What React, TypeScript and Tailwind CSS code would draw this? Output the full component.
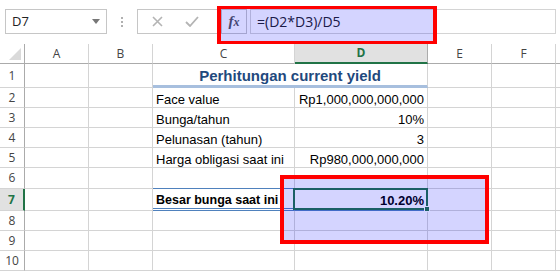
import type { ReactNode } from 'react'

const cols = ['A', 'B', 'C', 'D', 'E', 'F', '']
const rowH = ['h-[24px]', 'h-[20px]', 'h-[20px]', 'h-[20px]', 'h-[20px]', 'h-[21px]', 'h-[22px]', 'h-[20px]', 'h-[20px]', 'h-[20px]']

const rows: { c?: string; d?: string; bold?: boolean }[] = [
  {},
  { c: 'Face value', d: 'Rp1,000,000,000,000' },
  { c: 'Bunga/tahun', d: '10%' },
  { c: 'Pelunasan (tahun)', d: '3' },
  { c: 'Harga obligasi saat ini', d: 'Rp980,000,000,000' },
  {},
  { c: 'Besar bunga saat ini', d: '10.20%', bold: true },
  {},
  {},
  {},
]

function Cell({ children, className = '' }: { children?: ReactNode; className?: string }) {
  return <div className={`relative flex items-end border-r border-b border-[#d4d4d4] px-[3px] pb-px leading-[13px] ${className}`}>{children}</div>
}

export default function App() {
  return (
    <div className="relative w-[560px] h-[271px] overflow-hidden bg-white font-['Liberation_Sans',Arial,sans-serif] text-[13px] text-black">
      {/* formula bar */}
      <div className="flex h-[44px] items-start pt-[9px] pl-[5px] pr-[4px] font-['Open_Sans','Noto_Sans',sans-serif]">
        <div className="flex h-[25px] w-[102px] items-center justify-between border border-[#c6c6c6] pl-[6px] pr-[6px] text-[13px] text-[#222]">
          <span>D7</span>
          <svg width="8" height="5" viewBox="0 0 8 5"><path d="M0 0h8L4 5z" fill="#777" /></svg>
        </div>
        <div className="flex h-[25px] w-[30px] flex-col items-center justify-center gap-[2px]">
          <span className="h-[2px] w-[2px] bg-[#b0b0b0]" />
          <span className="h-[2px] w-[2px] bg-[#b0b0b0]" />
          <span className="h-[2px] w-[2px] bg-[#b0b0b0]" />
        </div>
        <div className="flex h-[25px] w-[81px] items-center gap-[22px] border border-[#c6c6c6] pl-[14px]">
          <svg width="11" height="11" viewBox="0 0 11 11"><path d="M1 1l9 9M10 1l-9 9" stroke="#b4b4b4" strokeWidth="1.6" /></svg>
          <svg width="14" height="11" viewBox="0 0 14 11"><path d="M1 6l4 4 8-9" stroke="#b4b4b4" strokeWidth="1.8" fill="none" /></svg>
        </div>
        <div className="ml-[3px] flex h-[25px] w-[26px] items-center justify-center border border-[#c6c6c6] font-['Liberation_Serif',serif] font-bold italic text-[#555]">
          <span className="text-[15px]">f</span><span className="text-[12px]">x</span>
        </div>
        <div className="ml-[3px] flex h-[25px] flex-1 items-center border border-[#d4d4d4] pl-[6px] text-[14px] text-[#222]">
          =(D2*D3)/D5
        </div>
      </div>

      {/* sheet */}
      <div className="grid grid-cols-[25px_64px_64px_142px_133px_64px_64px_1fr]">
        {/* corner */}
        <div className="relative h-[20px] border-r border-b border-[#ababab]">
          <svg className="absolute bottom-[3px] right-[3px]" width="12" height="12" viewBox="0 0 12 12"><path d="M12 0v12H0z" fill="#dadada" /></svg>
        </div>
        {cols.map(c => (
          <div
            key={c || 'g'}
            className={`flex h-[20px] items-center justify-center font-['Open_Sans','Noto_Sans',sans-serif] text-[12px] ${
              c === 'D'
                ? 'border-r border-[#ababab] border-b-2 border-b-[#217346] bg-[#e1e1e1] font-bold text-[#217346]'
                : 'border-r border-r-[#d4d4d4] border-b border-b-[#ababab] text-[#444]'
            }`}
          >
            {c}
          </div>
        ))}

        {rows.map((r, i) => {
          const n = i + 1
          const h = rowH[i]
          const sel = n === 7
          return [
            <div
              key={`h${n}`}
              className={`flex ${h} items-center justify-center font-['Open_Sans','Noto_Sans',sans-serif] text-[12px] ${
                sel
                  ? 'border-b border-b-[#d4d4d4] border-r-2 border-r-[#217346] bg-[#e1e1e1] font-bold text-[#217346]'
                  : 'border-b border-b-[#d4d4d4] border-r border-r-[#ababab] text-[#444]'
              }`}
            >
              {n}
            </div>,
            <Cell key={`a${n}`} className={h} />,
            <Cell key={`b${n}`} className={h} />,
            n === 1 ? (
              <div
                key="title"
                className={`col-span-2 flex ${h} items-end justify-center border-r border-[#d4d4d4] border-b-[3px] border-b-[#a7bfde] pb-[2px] text-[15px] font-bold leading-[15px] text-[#1f497d]`}
              >
                Perhitungan current yield
              </div>
            ) : (
              [
                <Cell
                  key={`c${n}`}
                  className={`${h} ${n === 6 ? 'border-b-[#4f81bd]' : ''} ${sel ? 'border-b-[3px] border-double border-b-[#4f81bd] text-[12.5px] font-bold' : ''}`}
                >
                  <span className="whitespace-nowrap">{r.c}</span>
                </Cell>,
                <Cell
                  key={`d${n}`}
                  className={`${h} justify-end ${n === 6 ? 'border-b-[#4f81bd]' : ''} ${sel ? 'border-b-[3px] border-double border-b-[#4f81bd] font-bold' : ''}`}
                >
                  {r.d}
                  {sel && (
                    <div className="absolute -left-[2px] -top-[1px] -right-px -bottom-[2px] z-10 border-2 border-[#217346]">
                      <div className="absolute -right-[4px] -bottom-[4px] h-[6px] w-[6px] border border-white bg-[#217346]" />
                    </div>
                  )}
                </Cell>,
              ]
            ),
            <Cell key={`e${n}`} className={h} />,
            <Cell key={`f${n}`} className={h} />,
            <Cell key={`g${n}`} className={`${h} border-r-0`} />,
          ]
        })}
      </div>

      {/* highlight annotations */}
      <div className="absolute left-[217px] top-[6px] z-20 h-[38px] w-[220px] border-x-4 border-y-[3px] border-[#ff0000] bg-[rgba(0,0,255,0.17)]" />
      <div className="absolute left-[280px] top-[175px] z-20 h-[69px] w-[209px] border-4 border-[#ff0000] bg-[rgba(0,0,255,0.17)]" />
    </div>
  )
}
